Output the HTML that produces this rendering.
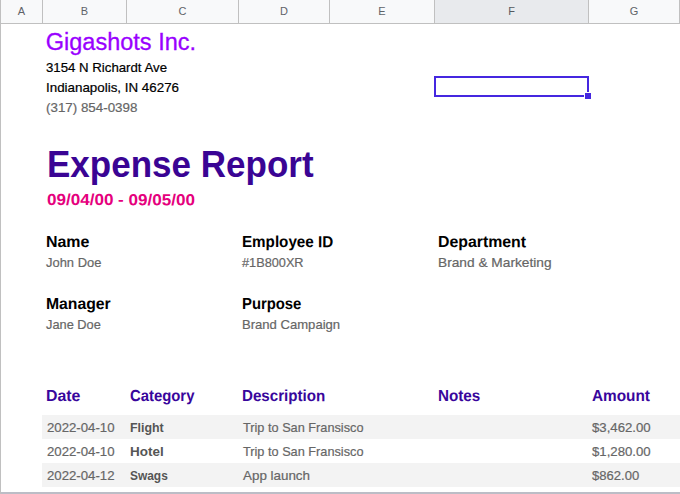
<!DOCTYPE html>
<html><head><meta charset="utf-8"><title>Expense Report</title>
<style>
html,body{margin:0;padding:0;background:#fff}
body{width:680px;height:494px;overflow:hidden;position:relative;font-family:"Liberation Sans",sans-serif}
.hdr{position:absolute;left:0;top:0;width:680px;height:23px;background:#f8f9fa;border-bottom:1px solid #c0c0c0}
.ch{position:absolute;top:0;height:23px;border-right:1px solid #c0c0c0;font-size:11px;line-height:23px;text-align:center;color:#5f6368;box-sizing:content-box}
.ch.sel{background:#e8eaed;color:#55595e}
.lv{position:absolute;left:0;top:0;width:1px;height:494px;background:#c0c0c0}
.bb{position:absolute;left:1px;top:492px;width:679px;height:2px;background:#bcbdc6}
.st{position:absolute;left:42px;width:638px;height:24px;background:#f3f3f3}
.selbox{position:absolute;left:434px;top:76px;width:151px;height:17px;border:2px solid #4527e0}
.hand{position:absolute;left:584px;top:92px;width:6px;height:6px;background:#4527e0;border:1px solid #fff}
.t{position:absolute;white-space:nowrap;transform-origin:0 0;font-family:"Liberation Sans",sans-serif}
.b{font-weight:bold}
</style></head><body>
<div class="hdr"></div>
<div class="ch" style="left:1px;width:41px">A</div>
<div class="ch" style="left:43px;width:83px">B</div>
<div class="ch" style="left:127px;width:111px">C</div>
<div class="ch" style="left:239px;width:90px">D</div>
<div class="ch" style="left:330px;width:104px">E</div>
<div class="ch sel" style="left:435px;width:153px">F</div>
<div class="ch" style="left:589px;width:90px">G</div>
<div class="lv"></div>
<div class="st" style="top:415px"></div>
<div class="st" style="top:463px"></div>
<div class="bb"></div>
<div class="selbox"></div><div class="hand"></div>
<div class="t" style="left:45.80px;top:31px;font-size:23.5px;line-height:23.5px;color:#9900ff;transform:scaleX(1.0000);-webkit-text-stroke:0.3px #9900ff">Gigashots Inc.</div>
<div class="t" style="left:46.14px;top:61px;font-size:13px;line-height:13px;color:#000000;transform:scaleX(1.0171);-webkit-text-stroke:0.2px #000000">3154 N Richardt Ave</div>
<div class="t" style="left:45.87px;top:81px;font-size:13px;line-height:13px;color:#000000;transform:scaleX(1.0281);-webkit-text-stroke:0.2px #000000">Indianapolis, IN 46276</div>
<div class="t" style="left:46.05px;top:101px;font-size:13px;line-height:13px;color:#666666;transform:scaleX(1.0276);-webkit-text-stroke:0.2px #666666">(317) 854-0398</div>
<div class="t b" style="left:46.74px;top:146px;font-size:37.5px;line-height:37.5px;color:#3a0494;transform:scaleX(0.9337)">Expense Report</div>
<div class="t b" style="left:47.27px;top:191.7px;font-size:16px;line-height:16px;color:#e5007d;transform:rotate(0.1deg) scaleX(1.0662)">09/04/00 - 09/05/00</div>
<div class="t b" style="left:46.02px;top:233.7px;font-size:16px;line-height:16px;color:#000000;transform:rotate(0.1deg) scaleX(0.9953)">Name</div>
<div class="t" style="left:46.43px;top:256px;font-size:13px;line-height:13px;color:#666666;transform:scaleX(0.9946);-webkit-text-stroke:0.2px #666666">John Doe</div>
<div class="t b" style="left:46.06px;top:295.7px;font-size:16px;line-height:16px;color:#000000;transform:rotate(0.1deg) scaleX(0.9832)">Manager</div>
<div class="t" style="left:46.42px;top:318px;font-size:13px;line-height:13px;color:#666666;transform:scaleX(0.9849);-webkit-text-stroke:0.2px #666666">Jane Doe</div>
<div class="t b" style="left:242.11px;top:233.7px;font-size:16px;line-height:16px;color:#000000;transform:rotate(0.1deg) scaleX(0.9491)">Employee ID</div>
<div class="t" style="left:242.40px;top:256px;font-size:13px;line-height:13px;color:#666666;transform:scaleX(0.9790);-webkit-text-stroke:0.2px #666666">#1B800XR</div>
<div class="t b" style="left:242.15px;top:295.7px;font-size:16px;line-height:16px;color:#000000;transform:rotate(0.1deg) scaleX(0.9279)">Purpose</div>
<div class="t" style="left:242.07px;top:318px;font-size:13px;line-height:13px;color:#666666;transform:scaleX(1.0055);-webkit-text-stroke:0.2px #666666">Brand Campaign</div>
<div class="t b" style="left:438.03px;top:233.7px;font-size:16px;line-height:16px;color:#000000;transform:rotate(0.1deg) scaleX(0.9902)">Department</div>
<div class="t" style="left:438.05px;top:256px;font-size:13px;line-height:13px;color:#666666;transform:scaleX(1.0547);-webkit-text-stroke:0.2px #666666">Brand &amp; Marketing</div>
<div class="t b" style="left:46.11px;top:387.7px;font-size:16px;line-height:16px;color:#38069c;transform:rotate(0.1deg) scaleX(0.9879)">Date</div>
<div class="t b" style="left:130.00px;top:387.7px;font-size:16px;line-height:16px;color:#38069c;transform:rotate(0.1deg) scaleX(0.9291)">Category</div>
<div class="t b" style="left:241.95px;top:387.7px;font-size:16px;line-height:16px;color:#38069c;transform:rotate(0.1deg) scaleX(0.9465)">Description</div>
<div class="t b" style="left:437.65px;top:387.7px;font-size:16px;line-height:16px;color:#38069c;transform:rotate(0.1deg) scaleX(0.9512)">Notes</div>
<div class="t b" style="left:592.30px;top:387.7px;font-size:16px;line-height:16px;color:#38069c;transform:rotate(0.1deg) scaleX(0.9600)">Amount</div>
<div class="t" style="left:47.10px;top:421px;font-size:13px;line-height:13px;color:#666666;transform:scaleX(1.0152);-webkit-text-stroke:0.2px #666666">2022-04-10</div>
<div class="t" style="left:47.10px;top:445px;font-size:13px;line-height:13px;color:#666666;transform:scaleX(1.0152);-webkit-text-stroke:0.2px #666666">2022-04-10</div>
<div class="t" style="left:47.10px;top:469px;font-size:13px;line-height:13px;color:#666666;transform:scaleX(1.0152);-webkit-text-stroke:0.2px #666666">2022-04-12</div>
<div class="t b" style="left:129.86px;top:421px;font-size:13px;line-height:13px;color:#555555;transform:scaleX(0.9534)">Flight</div>
<div class="t b" style="left:129.76px;top:445px;font-size:13px;line-height:13px;color:#555555;transform:scaleX(1.0355)">Hotel</div>
<div class="t b" style="left:129.88px;top:469px;font-size:13px;line-height:13px;color:#555555;transform:scaleX(0.9175)">Swags</div>
<div class="t" style="left:242.90px;top:421px;font-size:13px;line-height:13px;color:#666666;transform:scaleX(0.9789);-webkit-text-stroke:0.2px #666666">Trip to San Fransisco</div>
<div class="t" style="left:242.90px;top:445px;font-size:13px;line-height:13px;color:#666666;transform:scaleX(0.9789);-webkit-text-stroke:0.2px #666666">Trip to San Fransisco</div>
<div class="t" style="left:242.57px;top:469px;font-size:13px;line-height:13px;color:#666666;transform:scaleX(1.0302);-webkit-text-stroke:0.2px #666666">App launch</div>
<div class="t" style="left:592.13px;top:421px;font-size:13px;line-height:13px;color:#666666;transform:scaleX(1.0145);-webkit-text-stroke:0.2px #666666">$3,462.00</div>
<div class="t" style="left:592.13px;top:445px;font-size:13px;line-height:13px;color:#666666;transform:scaleX(1.0144);-webkit-text-stroke:0.2px #666666">$1,280.00</div>
<div class="t" style="left:592.12px;top:469px;font-size:13px;line-height:13px;color:#666666;transform:scaleX(1.0048);-webkit-text-stroke:0.2px #666666">$862.00</div>
</body></html>
